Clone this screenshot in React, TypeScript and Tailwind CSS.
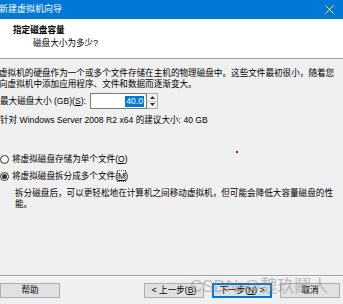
import React from 'react';

const cjk = '"Liberation Sans", "Noto Sans CJK SC", sans-serif';

const Radio = ({ checked }: { checked?: boolean }) => (
  <span className="w-[9px] h-[9px] rounded-full border border-[#333333] bg-white flex items-center justify-center shrink-0">
    {checked && <span className="w-[5px] h-[5px] rounded-full bg-[#333333]" />}
  </span>
);

const Btn = ({ children, focus }: { children: React.ReactNode; focus?: boolean }) => (
  <div
    className={
      'w-[60px] h-[15px] flex items-center justify-center bg-[#e1e1e1] text-[8.6px] text-black ' +
      (focus ? 'border-2 border-[#0078d7]' : 'border border-[#adadad]')
    }
  >
    {children}
  </div>
);

export default function App() {
  return (
    <div
      className="relative w-[343px] h-[304px] overflow-hidden bg-[#f0f0f0] flex flex-col text-[8.6px] leading-[11px] text-black"
      style={{ fontFamily: cjk }}
    >
      {/* title bar */}
      <div className="h-[19px] bg-[#0078d7] flex items-center justify-between shrink-0">
        <span className="ml-[-1px] text-white text-[9px]">新建虚拟机向导</span>
        <svg width="9" height="9" viewBox="0 0 9 9" className="mr-[9px]">
          <path d="M0.5 0.5 L8.5 8.5 M8.5 0.5 L0.5 8.5" stroke="#ffffff" strokeWidth="1" />
        </svg>
      </div>

      {/* header */}
      <div className="h-[40px] bg-white border-b border-[#a0a0a0] shrink-0 pl-[13px] pt-[6px]">
        <div className="font-bold">指定磁盘容量</div>
        <div className="pl-[20px] mt-[2px]">磁盘大小为多少?</div>
      </div>

      {/* body */}
      <div className="ml-[-1px] mt-[9px]">
        <div className="whitespace-nowrap">虚拟机的硬盘作为一个或多个文件存储在主机的物理磁盘中。这些文件最初很小，随着您</div>
        <div className="whitespace-nowrap">向虚拟机中添加应用程序、文件和数据而逐渐变大。</div>
      </div>

      <div className="flex items-center mt-[3px] h-[16px]">
        <span className="w-[90px] whitespace-nowrap">
          最大磁盘大小 (GB)(<span className="underline">S</span>):
        </span>
        <div className="w-[57px] h-[16px] bg-white border border-[#7a7a7a] flex items-center justify-end pr-[2px]">
          <span className="bg-[#0078d7] text-white px-[1px] leading-[11px]">40.0</span>
        </div>
        <div className="w-[11px] h-[16px] flex flex-col border border-l-0 border-[#adadad] bg-[#f0f0f0]">
          <div className="flex-1 flex items-center justify-center border-b border-[#d0d0d0]">
            <svg width="5" height="3" viewBox="0 0 5 3"><path d="M0 3 L2.5 0 L5 3 Z" fill="#333" /></svg>
          </div>
          <div className="flex-1 flex items-center justify-center">
            <svg width="5" height="3" viewBox="0 0 5 3"><path d="M0 0 L2.5 3 L5 0 Z" fill="#333" /></svg>
          </div>
        </div>
      </div>

      <div className="mt-[6px] whitespace-nowrap">针对 Windows Server 2008 R2 x64 的建议大小: 40 GB</div>

      <div className="relative mt-[28px] flex items-center gap-[3px]">
        <Radio />
        <span className="whitespace-nowrap">
          将虚拟磁盘存储为单个文件(<span className="underline">O</span>)
        </span>
        <span className="absolute left-[236px] top-[-3px] w-[2px] h-[2px] bg-[#e00000]" />
      </div>
      <div className="mt-[6px] flex items-center gap-[3px]">
        <Radio checked />
        <span className="whitespace-nowrap">
          将虚拟磁盘拆分成多个文件(<span className="underline outline-1 outline-dotted outline-[#555]">M</span>)
        </span>
      </div>
      <div className="mt-[6px] pl-[15px] whitespace-nowrap">
        <div>拆分磁盘后，可以更轻松地在计算机之间移动虚拟机，但可能会降低大容量磁盘的性</div>
        <div>能。</div>
      </div>

      <div className="flex-1" />

      {/* footer */}
      <div className="border-t border-[#a0a0a0] shrink-0">
        <div className="border-t border-white h-[7px]" />
        <div className="flex items-center h-[15px] mb-[6px]">
          <Btn>帮助</Btn>
          <div className="ml-[84px] flex gap-[8px]">
            <Btn>&lt; 上一步(<span className="underline">B</span>)</Btn>
            <Btn focus>下一步(<span className="underline">N</span>) &gt;</Btn>
            <Btn>取消</Btn>
          </div>
        </div>
      </div>

      {/* watermark */}
      <div className="absolute left-[190px] top-[277px] text-[17px] leading-[20px] text-[#8a8a8a]/50 whitespace-nowrap pointer-events-none">
        CSDN @魏玖鬬人
      </div>
    </div>
  );
}
